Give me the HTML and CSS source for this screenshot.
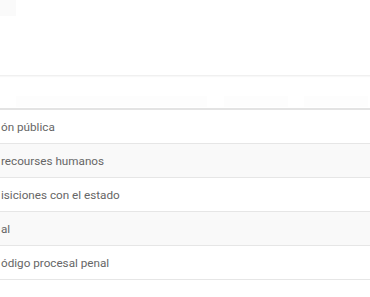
FILE: index.html
```html
<!DOCTYPE html>
<html lang="es">
<head>
    <meta charset="UTF-8">
    <meta name="viewport" content="width=device-width, initial-scale=1.0">
    <title>Cursos</title>
    <link rel="stylesheet" href="styles.css">
</head>
<body>

<div class="top">
    <div class="corner"></div>
</div>

<div class="filters">
    <div class="filter f1"></div>
    <div class="filter f2"></div>
    <div class="filter f3"></div>
</div>

<ul class="rows">
    <li class="row"><span class="cell">ón pública</span></li>
    <li class="row alt"><span class="cell">recourses humanos</span></li>
    <li class="row"><span class="cell">isiciones con el estado</span></li>
    <li class="row alt"><span class="cell">al</span></li>
    <li class="row"><span class="cell">ódigo procesal penal</span></li>
</ul>

</body>
</html>
```

FILE: styles.css
```css
body {
    margin: 0;
    background-color: #ffffff;
    font-family: Roboto, "Liberation Sans", sans-serif;
    overflow: hidden;
}
.top {
    height: 75px;
    border-bottom: 1px solid #f0f0f0;
    box-shadow: 0 1px 1px #f8f8f8;
}
.corner {
    width: 16px;
    height: 16px;
    background-color: #fafafa;
}
.filters {
    height: 32px;
    display: flex;
    align-items: flex-end;
    border-bottom: 2px solid #e3e3e3;
}
.filter {
    height: 11px;
    margin-bottom: 1px;
    background-color: #fdfdfd;
}
.f1 {
    width: 191px;
    margin-left: 16px;
}
.f2 {
    width: 64px;
    margin-left: 17px;
}
.f3 {
    width: 64px;
    margin-left: 16px;
}
.rows {
    list-style: none;
    margin: 0;
    padding: 0;
}
.row {
    height: 33px;
    display: flex;
    align-items: center;
    border-bottom: 1px solid #e6e6e6;
    white-space: nowrap;
}
.alt {
    background-color: #f9f9f9;
}
.cell {
    padding-left: 1px;
    font-size: 11.7px;
    color: #666666;
}
```
